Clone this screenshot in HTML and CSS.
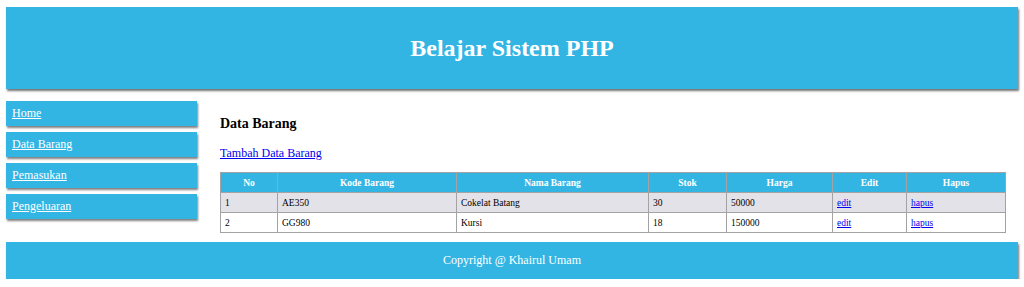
FILE: index.html
```html
<!DOCTYPE html>
<html>
<head>
<meta charset="utf-8">
<link rel="stylesheet" href="styles.css">
</head>
<body>
<div class="wrap">
  <header class="header"><h1>Belajar Sistem PHP</h1></header>
  <div class="main">
    <nav class="side">
      <a class="nav-item" href="#">Home</a>
      <a class="nav-item" href="#">Data Barang</a>
      <a class="nav-item" href="#">Pemasukan</a>
      <a class="nav-item" href="#">Pengeluaran</a>
    </nav>
    <section class="content">
      <h2 class="title">Data Barang</h2>
      <a class="add" href="#">Tambah Data Barang</a>
      <table class="tbl">
        <thead>
          <tr>
            <th class="c-no">No</th>
            <th class="c-kode">Kode Barang</th>
            <th class="c-nama">Nama Barang</th>
            <th class="c-stok">Stok</th>
            <th class="c-harga">Harga</th>
            <th class="c-edit">Edit</th>
            <th class="c-hapus">Hapus</th>
          </tr>
        </thead>
        <tbody>
          <tr class="odd">
            <td>1</td><td>AE350</td><td>Cokelat Batang</td><td>30</td><td>50000</td>
            <td><a href="#">edit</a></td><td><a href="#">hapus</a></td>
          </tr>
          <tr>
            <td>2</td><td>GG980</td><td>Kursi</td><td>18</td><td>150000</td>
            <td><a href="#">edit</a></td><td><a href="#">hapus</a></td>
          </tr>
        </tbody>
      </table>
    </section>
  </div>
  <footer class="footer">Copyright @ Khairul Umam</footer>
</div>
</body>
</html>
```
FILE: styles.css
```css
html, body { margin: 0; padding: 0; background: #fff; }
body { font-family: "Liberation Serif", "Times New Roman", serif; color: #000; }
.wrap { padding: 7px 6px 0 6px; }
.header {
  background: #33b5e4;
  height: 82px;
  display: flex;
  align-items: center;
  justify-content: center;
  box-shadow: 1px 2px 2px rgba(0,0,0,0.55);
}
.header h1 { margin: 0; color: #fff; font-size: 24px; font-weight: bold; }
.main { display: flex; margin-top: 12px; }
.side { width: 191px; display: flex; flex-direction: column; gap: 6px; flex: none; }
.nav-item {
  display: block;
  height: 25px;
  line-height: 25px;
  background: #33b5e4;
  color: #fff;
  font-size: 12px;
  padding-left: 6px;
  box-shadow: 1px 2px 2px rgba(0,0,0,0.5);
}
.content { flex: 1; padding-left: 23px; padding-right: 12px; }
.title { margin: 14px 0 0 0; font-size: 14px; font-weight: bold; line-height: 18px; }
.add { display: inline-block; margin-top: 13px; color: #0000ee; font-size: 12px; line-height: 15px; }
.tbl {
  margin-top: 11px;
  width: 100%;
  border-collapse: collapse;
  border: 1px solid #a3a3a3;
  font-size: 9.5px;
}
.tbl th, .tbl td { border: 1px solid #a3a3a3; height: 19px; padding: 0 4px; text-align: left; }
.tbl th { background: #33b5e4; color: #fff; text-align: center; font-weight: bold; }
.tbl tr.odd td { background: #e3e2e8; }
.tbl a { color: #0000ee; }
.c-no { width: 48px; }
.c-kode { width: 170px; }
.c-nama { width: 183px; }
.c-stok { width: 69px; }
.c-harga { width: 97px; }
.c-edit { width: 65px; }
.footer {
  margin-top: 9px;
  background: #33b5e4;
  height: 37px;
  line-height: 37px;
  color: #fff;
  text-align: center;
  font-size: 12px;
  box-shadow: 1px 2px 2px rgba(0,0,0,0.55);
}
```
